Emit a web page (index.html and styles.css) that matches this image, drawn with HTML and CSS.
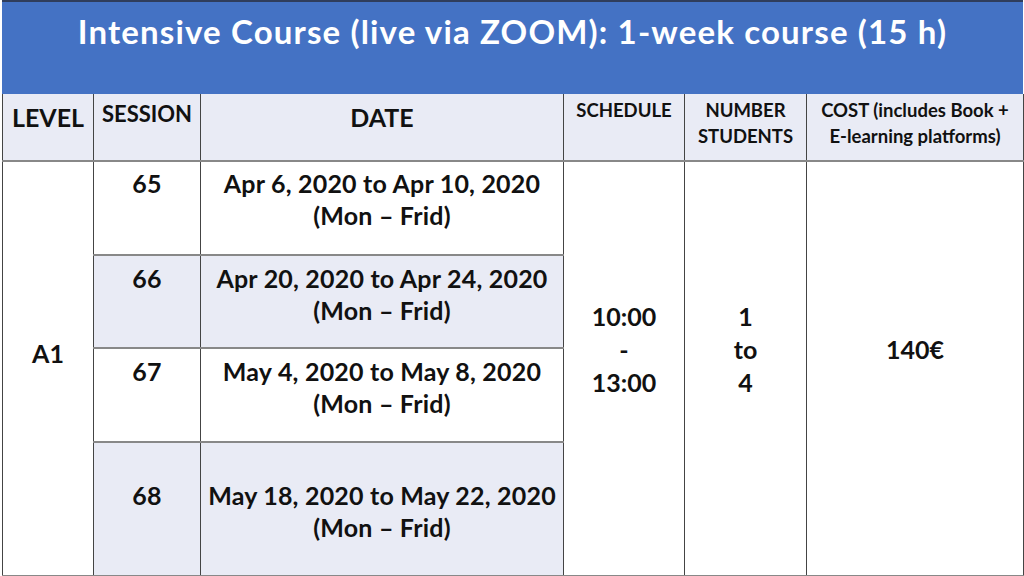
FILE: index.html
```html
<!DOCTYPE html>
<html>
<head>
<meta charset="utf-8">
<link rel="stylesheet" href="styles.css">
</head>
<body>
<div class="sheet">
  <div class="banner"><h1 class="title">Intensive Course (live via ZOOM): 1-week course (15 h)</h1></div>
  <table class="grid">
    <colgroup>
      <col class="c-level"><col class="c-session"><col class="c-date"><col class="c-sched"><col class="c-num"><col class="c-cost">
    </colgroup>
    <thead>
      <tr class="head">
        <th class="h-big">LEVEL</th>
        <th class="h-mid">SESSION</th>
        <th class="h-big">DATE</th>
        <th class="h-small">SCHEDULE</th>
        <th class="h-small">NUMBER<br>STUDENTS</th>
        <th class="h-small">COST (includes Book +<br>E-learning platforms)</th>
      </tr>
    </thead>
    <tbody>
      <tr class="row r-white r-first">
        <td class="span span-level" rowspan="4">A1</td>
        <td class="cell">65</td>
        <td class="cell">Apr 6, 2020 to Apr 10, 2020<br>(Mon – Frid)</td>
        <td class="span" rowspan="4">10:00<br>-<br>13:00</td>
        <td class="span" rowspan="4">1<br>to<br>4</td>
        <td class="span" rowspan="4">140€</td>
      </tr>
      <tr class="row r-tint r-second">
        <td class="cell">66</td>
        <td class="cell">Apr 20, 2020 to Apr 24, 2020<br>(Mon – Frid)</td>
      </tr>
      <tr class="row r-white">
        <td class="cell">67</td>
        <td class="cell">May 4, 2020 to May 8, 2020<br>(Mon – Frid)</td>
      </tr>
      <tr class="row r-tint r-last">
        <td class="cell">68</td>
        <td class="cell">May 18, 2020 to May 22, 2020<br>(Mon – Frid)</td>
      </tr>
    </tbody>
  </table>
</div>
</body>
</html>
```
FILE: styles.css
```css
* { box-sizing: border-box; }
html, body { margin: 0; padding: 0; background: #fff; }
body { font-family: "Lato", "Open Sans", sans-serif; font-weight: 700; color: #111; }
.sheet { width: 1024px; height: 576px; overflow: hidden; padding: 0 1px 0 2px; }
.banner {
  height: 94px;
  background: #4472c4;
  border-top: 2px solid #2f3d5c;
  display: flex;
  justify-content: center;
  padding-top: 9px;
}
.title { margin: 0; color: #fff; font-size: 33px; font-weight: 700; line-height: 40px; letter-spacing: 1.15px; white-space: nowrap; }
.grid { border-collapse: collapse; table-layout: fixed; width: 1021px; }
.c-level { width: 91px; }
.c-session { width: 107px; }
.c-date { width: 363px; }
.c-sched { width: 121px; }
.c-num { width: 122px; }
.c-cost { width: 217px; }
.grid th, .grid td { border: 1px solid #444; text-align: center; padding: 0; }
.head { height: 67px; background: #e9ebf5; }
.head th { vertical-align: top; border-bottom: 2px solid #888; border-top: 0; white-space: nowrap; }
.h-big { font-size: 25px; padding-top: 8px !important; }
.h-mid { font-size: 22px; padding-top: 6px !important; }
.h-small { font-size: 18.5px; line-height: 26px; padding-top: 3px !important; }
.row { height: 94px; }
.r-first { height: 94px; }
.r-second { height: 93px; }
.r-last { height: 134px; }
.r-white { background: #fff; }
.r-tint { background: #e9ebf5; }
.row td.cell { border-top: 2px solid #888; border-bottom: 2px solid #888; vertical-align: top; font-size: 25px; line-height: 32px; padding-top: 6px; letter-spacing: 0.2px; white-space: nowrap; }
.r-first td.cell { padding-top: 5px; }
.r-last td.cell { padding-top: 36px; }
.span { background: #fff; vertical-align: middle; font-size: 25px; line-height: 33px; padding-bottom: 38px !important; border-bottom: 2px solid #888 !important; }
.span-level { padding-bottom: 30px !important; }
```
